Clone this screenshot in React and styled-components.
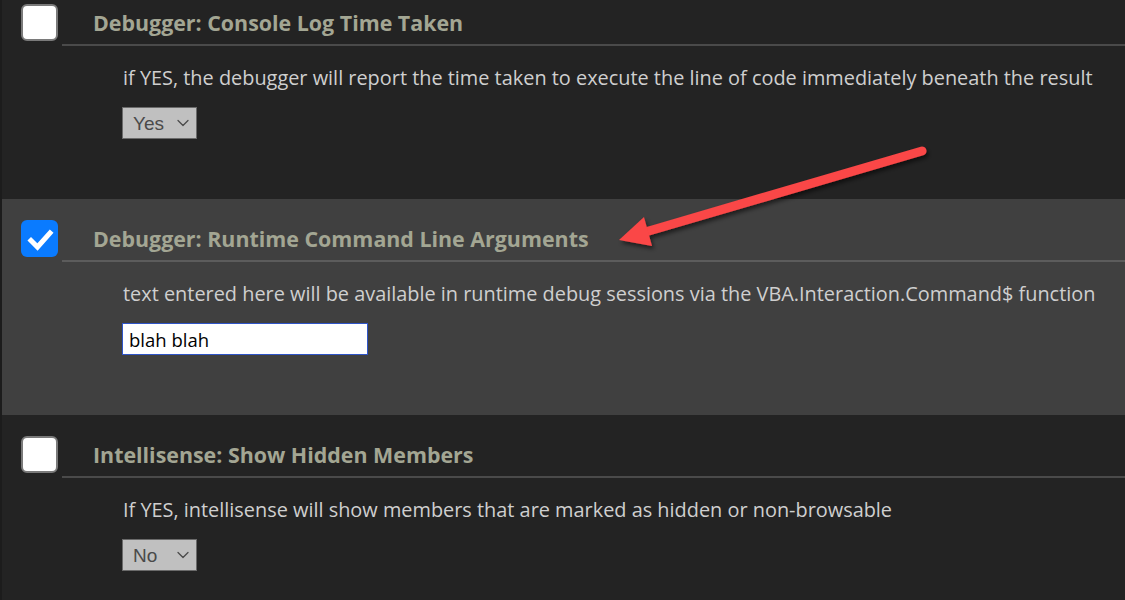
import React from 'react';
import styled, { createGlobalStyle } from 'styled-components';
import { ChevronDown } from 'lucide-react';

const GlobalStyle = createGlobalStyle`
    html, body {
        margin: 0;
        padding: 0;
        background-color: #232323;
        overflow: hidden;
    }
`;

const Page = styled.div`
    position: relative;
    width: 1125px;
    height: 600px;
    overflow: hidden;
    background-color: #232323;
    border-left: 2px solid #1c1c1c;
    box-sizing: border-box;
    font-family: 'Open Sans', 'Noto Sans', sans-serif;
`;

const List = styled.div`
    margin-top: -17px;
`;

const Setting = styled.div`
    height: 216px;
    box-sizing: border-box;
    padding: 21px 0 0 19px;
    background-color: ${(p) => (p.active ? '#404040' : 'transparent')};
`;

const Header = styled.div`
    display: flex;
    align-items: flex-start;
`;

const Check = styled.div`
    width: 37px;
    height: 37px;
    box-sizing: border-box;
    border-radius: 6px;
    flex-shrink: 0;
    display: flex;
    align-items: center;
    justify-content: center;
    background-color: ${(p) => (p.checked ? '#0a7bff' : '#ffffff')};
    border: ${(p) => (p.checked ? 'none' : '2px solid #7a7a7a')};
`;

const TitleBar = styled.div`
    flex: 1;
    margin-left: 4px;
    height: 42px;
    box-sizing: border-box;
    display: flex;
    align-items: center;
    padding: 0 0 3px 31px;
    border-bottom: 2px solid ${(p) => (p.active ? '#5c5c5c' : '#4a4a4a')};
`;

const Title = styled.h3`
    margin: 0;
    font-size: 21.4px;
    font-weight: 700;
    color: #a3a693;
`;

const Body = styled.div`
    padding-left: 102px;
    padding-top: 18px;
`;

const Description = styled.p`
    margin: 0;
    font-size: 19.9px;
    line-height: 28px;
    color: #cfcfcf;
    white-space: nowrap;
`;

const SelectWrap = styled.div`
    position: relative;
    width: 75px;
    height: 32px;
    margin-top: 15px;
    margin-left: -1px;
`;

const Select = styled.select`
    appearance: none;
    width: 100%;
    height: 100%;
    box-sizing: border-box;
    border: 1px solid #6a6a6a;
    border-radius: 0;
    background-color: #c0c0c0;
    color: #4a4a4a;
    font-family: 'Liberation Sans', Arial, sans-serif;
    font-size: 19px;
    padding: 0 0 0 10px;
    outline: none;
`;

const Chevron = styled(ChevronDown)`
    position: absolute;
    right: 4px;
    top: 6px;
    pointer-events: none;
    color: #4a4a4a;
`;

const TextInput = styled.input`
    display: block;
    width: 246px;
    height: 32px;
    box-sizing: border-box;
    margin-top: 15px;
    margin-left: -1px;
    border: 1px solid #2f55c8;
    background-color: #fff;
    color: #000;
    font-family: 'Open Sans', 'Noto Sans', sans-serif;
    font-size: 18.5px;
    padding: 0 6px;
    outline: none;
`;

const Arrow = styled.svg`
    position: absolute;
    left: 0;
    top: 0;
    pointer-events: none;
`;

const settings = [
    {
        title: 'Debugger: Console Log Time Taken',
        description: 'if YES, the debugger will report the time taken to execute the line of code immediately beneath the result',
        kind: 'select',
        value: 'Yes',
    },
    {
        title: 'Debugger: Runtime Command Line Arguments',
        description: 'text entered here will be available in runtime debug sessions via the VBA.Interaction.Command$ function',
        kind: 'text',
        value: 'blah blah',
        active: true,
    },
    {
        title: 'Intellisense: Show Hidden Members',
        description: 'If YES, intellisense will show members that are marked as hidden or non-browsable',
        kind: 'select',
        value: 'No',
    },
];

function CheckMark() {
    return (
        <svg width="28" height="28" viewBox="0 0 28 28">
            <path d="M5 15.5 L11.5 22 L24 8" fill="none" stroke="#fff" strokeWidth="5" strokeLinecap="square" />
        </svg>
    );
}

export default function App() {
    return (
        <Page>
            <GlobalStyle />
            <List>
                {settings.map((s) => (
                    <Setting key={s.title} active={s.active}>
                        <Header>
                            <Check checked={s.active}>{s.active ? <CheckMark /> : null}</Check>
                            <TitleBar active={s.active}>
                                <Title>{s.title}</Title>
                            </TitleBar>
                        </Header>
                        <Body>
                            <Description>{s.description}</Description>
                            {s.kind === 'select' ? (
                                <SelectWrap>
                                    <Select defaultValue={s.value}>
                                        <option>Yes</option>
                                        <option>No</option>
                                    </Select>
                                    <Chevron size={20} strokeWidth={1.5} />
                                </SelectWrap>
                            ) : (
                                <TextInput defaultValue={s.value} />
                            )}
                        </Body>
                    </Setting>
                ))}
            </List>
            {/* red callout arrow */}
            <Arrow width="1125" height="600" viewBox="0 0 1125 600">
                <defs>
                    <filter id="shadow" x="-10%" y="-10%" width="130%" height="140%">
                        <feDropShadow dx="2" dy="3" stdDeviation="2" floodColor="#000" floodOpacity="0.55" />
                    </filter>
                </defs>
                <g filter="url(#shadow)">
                    <line x1="920" y1="151" x2="640" y2="233" stroke="#fa4646" strokeWidth="9" strokeLinecap="round" />
                    <polygon points="617,240 642,217 650,246" fill="#fa4646" />
                </g>
            </Arrow>
        </Page>
    );
}
